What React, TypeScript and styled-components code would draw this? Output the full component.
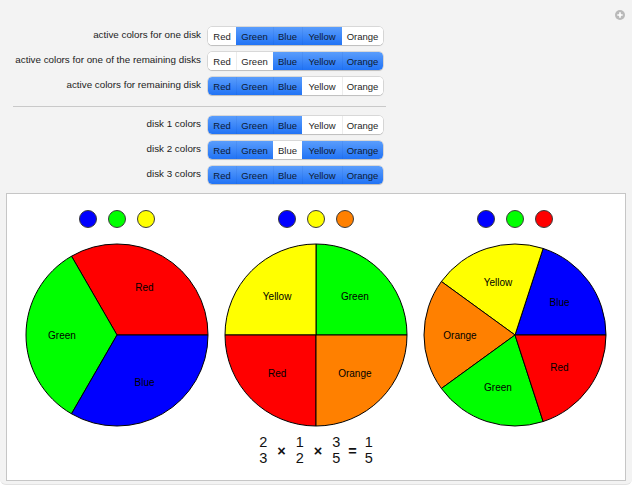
import React from 'react';
import styled, { createGlobalStyle } from 'styled-components';

const COLORS: Record<string, string> = {
  Red: '#ff0000',
  Green: '#00ff00',
  Blue: '#0000ff',
  Yellow: '#ffff00',
  Orange: '#ff8000',
};

const NAMES = ['Red', 'Green', 'Blue', 'Yellow', 'Orange'];
const SEG_WIDTHS: Record<string, number> = { Red: 28, Green: 37, Blue: 29, Yellow: 40, Orange: 41 };

type Control = { label: string; active: string[] };

const topControls: Control[] = [
  { label: 'active colors for one disk', active: ['Green', 'Blue', 'Yellow'] },
  { label: 'active colors for one of the remaining disks', active: ['Blue', 'Yellow', 'Orange'] },
  { label: 'active colors for remaining disk', active: ['Red', 'Green', 'Blue'] },
];

const diskControls: Control[] = [
  { label: 'disk 1 colors', active: ['Red', 'Green', 'Blue'] },
  { label: 'disk 2 colors', active: ['Red', 'Green', 'Yellow', 'Orange'] },
  { label: 'disk 3 colors', active: ['Red', 'Green', 'Blue', 'Yellow', 'Orange'] },
];

// slices listed counter-clockwise starting at east
const disks = [
  { dots: ['Blue', 'Green', 'Yellow'], slices: ['Red', 'Green', 'Blue'] },
  { dots: ['Blue', 'Yellow', 'Orange'], slices: ['Green', 'Yellow', 'Red', 'Orange'] },
  { dots: ['Blue', 'Green', 'Red'], slices: ['Blue', 'Yellow', 'Orange', 'Green', 'Red'] },
];

const GlobalStyle = createGlobalStyle`
  html, body {
    margin: 0;
    padding: 0;
    background: #ffffff;
  }
  body {
    font-family: "Liberation Sans", Arial, sans-serif;
  }
`;

const SegmentedRow = ({ control }: { control: Control }) => (
  <>
    <Label>{control.label}</Label>
    <Group>
      {NAMES.map((n, i) => {
        const on = control.active.includes(n);
        const prevOn = i > 0 && control.active.includes(NAMES[i - 1]);
        return (
          <Segment key={n} $on={on} $w={SEG_WIDTHS[n]} $first={i === 0} $last={i === NAMES.length - 1} $sep={i > 0 && on === prevOn}>
            {n}
          </Segment>
        );
      })}
    </Group>
  </>
);

const Pie = ({ slices }: { slices: string[] }) => {
  const cx = 93;
  const cy = 93;
  const r = 91;
  const step = (Math.PI * 2) / slices.length;
  const pt = (a: number, rad: number) => [cx + rad * Math.cos(a), cy - rad * Math.sin(a)];
  return (
    <svg width={186} height={186} viewBox="0 0 186 186">
      {slices.map((s, i) => {
        const a0 = i * step;
        const a1 = (i + 1) * step;
        const [x0, y0] = pt(a0, r);
        const [x1, y1] = pt(a1, r);
        const large = a1 - a0 > Math.PI ? 1 : 0;
        const d = `M${cx},${cy} L${x0},${y0} A${r},${r} 0 ${large} 0 ${x1},${y1} Z`;
        return <path key={s} d={d} fill={COLORS[s]} stroke="#000" strokeWidth={1} strokeLinejoin="round" />;
      })}
      {slices.map((s, i) => {
        const [lx, ly] = pt((i + 0.5) * step, 55);
        return (
          <text key={s + 't'} x={lx} y={ly} textAnchor="middle" dominantBaseline="central" fontSize={10} fontFamily='"Liberation Sans", Arial, sans-serif' fill="#000">
            {s}
          </text>
        );
      })}
    </svg>
  );
};

const Frac = ({ n, d }: { n: number; d: number }) => (
  <FracBox>
    <Digit>{n}</Digit>
    <Digit>{d}</Digit>
  </FracBox>
);

export default function App() {
  return (
    <Page>
      <GlobalStyle />
      <PlusIcon width={10} height={10} viewBox="0 0 10 10">
        <circle cx={5} cy={5} r={5} fill="#b9b9b9" />
        <path d="M5 2.3v5.4M2.3 5h5.4" stroke="#fff" strokeWidth={1.6} />
      </PlusIcon>
      <Controls>
        {topControls.map((c) => (
          <SegmentedRow key={c.label} control={c} />
        ))}
      </Controls>
      <Divider />
      <Controls>
        {diskControls.map((c) => (
          <SegmentedRow key={c.label} control={c} />
        ))}
      </Controls>
      <Panel>
        <Disks>
          {disks.map((dk, i) => (
            <DiskColumn key={i}>
              <Dots>
                {dk.dots.map((c) => (
                  <Dot key={c} $color={COLORS[c]} />
                ))}
              </Dots>
              <Pie slices={dk.slices} />
            </DiskColumn>
          ))}
        </Disks>
        <Equation>
          <Frac n={2} d={3} />
          <Op $space={10}>×</Op>
          <Frac n={1} d={2} />
          <Op $space={10}>×</Op>
          <Frac n={3} d={5} />
          <Op $space={8}>=</Op>
          <Frac n={1} d={5} />
        </Equation>
      </Panel>
    </Page>
  );
}

const Page = styled.div`
  position: relative;
  width: 632px;
  height: 485px;
  box-sizing: border-box;
  background: #f3f3f3;
  border-bottom: 1px solid #e2e2e2;
  border-radius: 0 0 6px 6px;
  padding-top: 27px;
`;

const PlusIcon = styled.svg`
  position: absolute;
  top: 10px;
  right: 7px;
`;

const Controls = styled.div`
  display: grid;
  grid-template-columns: 201px auto;
  column-gap: 7px;
  row-gap: 7px;
  align-items: center;
  justify-content: start;
`;

const Label = styled.div`
  text-align: right;
  font-size: 9.8px;
  color: #1c1c1c;
  white-space: nowrap;
  line-height: 12px;
  margin-top: -2px;
`;

const Group = styled.div`
  display: flex;
  height: 18px;
  width: max-content;
  border-radius: 4px;
  box-shadow: 0 0 0 0.5px rgba(0, 0, 0, 0.22), 0 1px 1px rgba(0, 0, 0, 0.12);
  overflow: hidden;
  background: #fff;
`;

const Segment = styled.div<{ $on: boolean; $w: number; $first: boolean; $last: boolean; $sep: boolean }>`
  width: ${(p) => p.$w}px;
  height: 18px;
  display: flex;
  align-items: center;
  justify-content: center;
  font-size: 9.5px;
  color: ${(p) => (p.$on ? '#0d1a33' : '#1e1e1e')};
  background: ${(p) => (p.$on ? 'linear-gradient(#5a9dfc, #2173f5)' : '#ffffff')};
  box-shadow: ${(p) => (p.$sep ? (p.$on ? 'inset 1px 0 0 rgba(0, 40, 140, 0.07)' : 'inset 1px 0 0 #ececec') : 'none')};
  border-radius: ${(p) => (p.$first ? '4px 0 0 4px' : p.$last ? '0 4px 4px 0' : '0')};
`;

const Divider = styled.div`
  margin: 11px 0 9px 13px;
  width: 373px;
  height: 1px;
  background: #c9c9c9;
`;

const Panel = styled.div`
  margin: 9px 6px 0 6px;
  height: 288px;
  box-sizing: border-box;
  background: #ffffff;
  border: 1px solid #c6c6c6;
  padding-top: 16px;
`;

const Disks = styled.div`
  display: flex;
  justify-content: center;
`;

const DiskColumn = styled.div`
  width: 199px;
  display: flex;
  flex-direction: column;
  align-items: center;
  gap: 14px;
`;

const Dots = styled.div`
  display: flex;
  gap: 11px;
`;

const Dot = styled.div<{ $color: string }>`
  width: 18px;
  height: 18px;
  box-sizing: border-box;
  border-radius: 50%;
  background: ${(p) => p.$color};
  border: 1px solid #3a3a3a;
`;

const Equation = styled.div`
  display: flex;
  justify-content: center;
  align-items: center;
  margin-top: 7px;
  font-size: 14.5px;
  color: #111;
`;

const FracBox = styled.div`
  display: flex;
  flex-direction: column;
  align-items: center;
`;

const Digit = styled.span`
  display: block;
  line-height: 15.5px;
  height: 15.5px;
`;

const Op = styled.span<{ $space: number }>`
  font-weight: bold;
  margin: 0 ${(p) => p.$space}px;
`;
